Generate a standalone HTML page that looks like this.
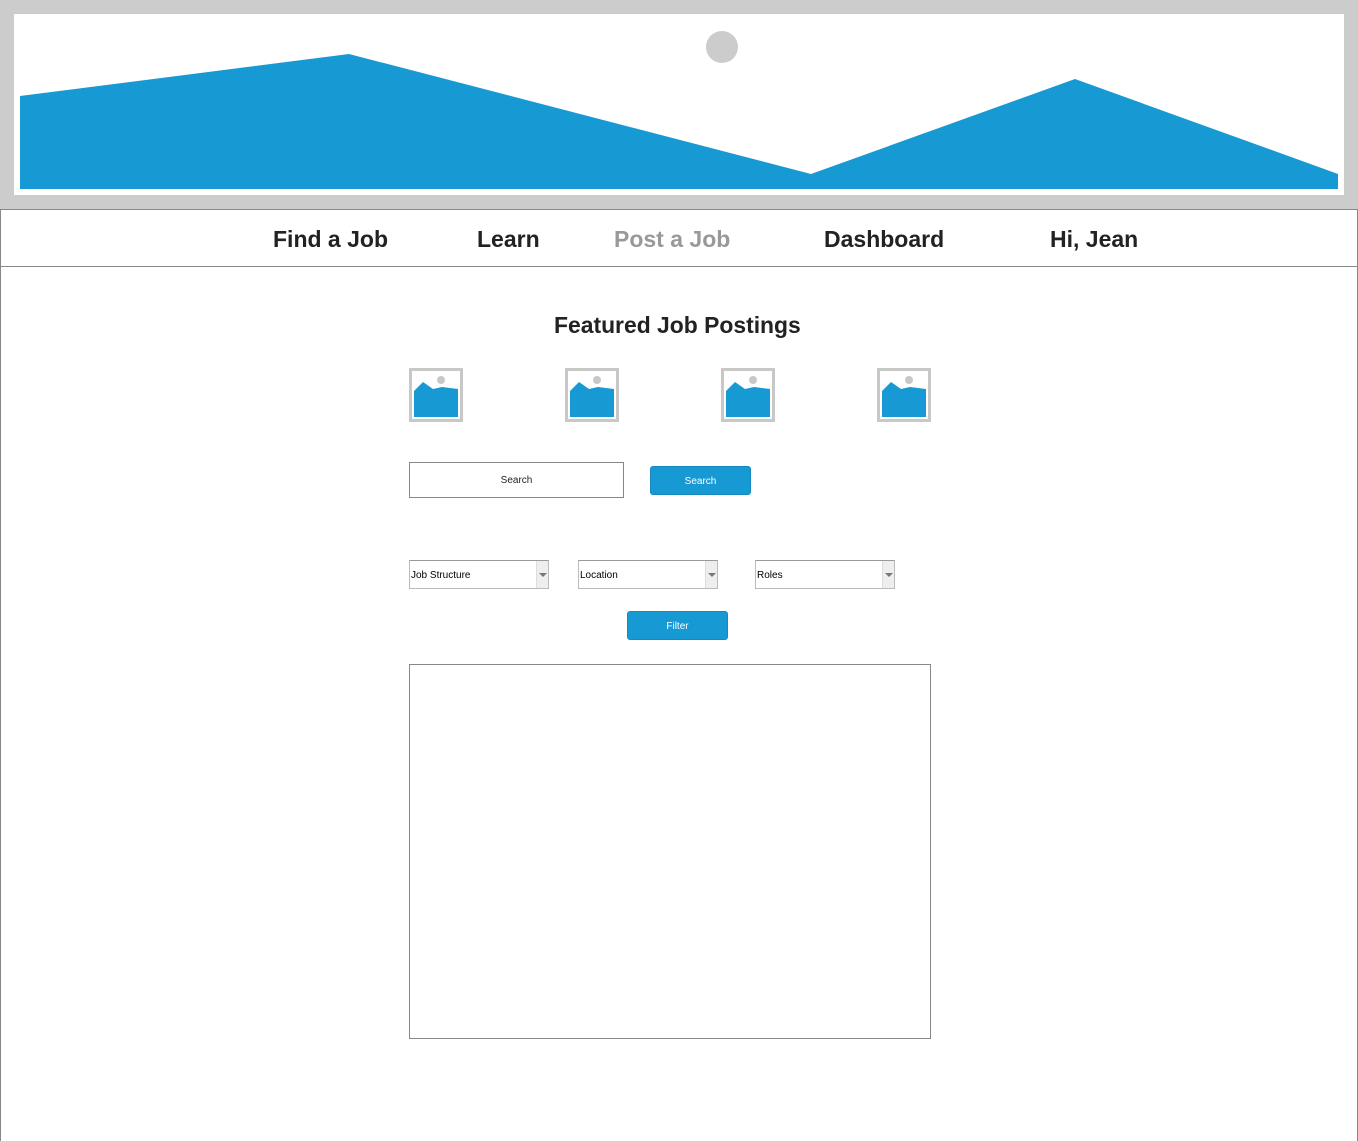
<!DOCTYPE html>
<html><head><meta charset="utf-8"><style>
*{margin:0;padding:0;box-sizing:border-box}
html,body{width:1358px;height:1141px;overflow:hidden;background:#fff;font-family:"Liberation Sans",Arial,sans-serif;position:relative}
.a{position:absolute}
.nav{font-size:23px;font-weight:bold;color:#222;top:225px;line-height:28px}
.img{width:54px;height:54px;top:368px}
.btn{background:#1799d3;border:1px solid #1589bf;border-radius:3px;color:#fff;font-size:10px;text-align:center;height:29px;line-height:30px;width:101px}
.sel{width:140px;height:29px;top:560px;border:1px solid #bbb;border-top:1px solid #999;font-size:10px;line-height:29px;padding-left:1px;color:#000;background:#fff}
.sel .arr{position:absolute;right:0;top:0;width:12px;height:27px;background:#eee;border-left:1px solid #ddd}
.sel .arr:after{content:"";position:absolute;left:2px;top:12px;border-left:4px solid transparent;border-right:4px solid transparent;border-top:4px solid #777}
</style></head><body>
<div class="a" style="left:0;top:0;width:1358px;height:209px;background:#cccccc"></div>
<div class="a" style="left:14px;top:14px;width:1330px;height:181px;background:#fff"></div>
<svg class="a" style="left:0;top:0" width="1358" height="209">
<polygon points="20,96 349,54 811,174 1075,79 1338,174 1338,189 20,189" fill="#1799d3"/>
<circle cx="722" cy="47" r="16" fill="#cccccc"/>
</svg>
<div class="a" style="left:0;top:209px;width:1358px;height:932px;border-left:1px solid #888;border-right:1px solid #888"></div>
<div class="a" style="left:0;top:209px;width:1358px;height:58px;border:1px solid #888"></div>
<div class="a nav" style="left:273px">Find a Job</div>
<div class="a nav" style="left:477px">Learn</div>
<div class="a nav" style="left:614px;color:#999">Post a Job</div>
<div class="a nav" style="left:824px">Dashboard</div>
<div class="a nav" style="left:1050px">Hi, Jean</div>
<div class="a" style="left:554px;top:311px;font-size:22.9px;font-weight:bold;color:#222;line-height:28px;white-space:nowrap">Featured Job Postings</div>
<svg class="a img" style="left:409px" viewBox="0 0 54 54"><rect x="1.5" y="1.5" width="51" height="51" fill="#fff" stroke="#c8c8c8" stroke-width="3"/><circle cx="32" cy="12" r="4" fill="#c8c8c8"/><polygon points="5,23 14,14 24,21 33,19 49,21 49,49 5,49" fill="#1799d3"/></svg>
<svg class="a img" style="left:565px" viewBox="0 0 54 54"><rect x="1.5" y="1.5" width="51" height="51" fill="#fff" stroke="#c8c8c8" stroke-width="3"/><circle cx="32" cy="12" r="4" fill="#c8c8c8"/><polygon points="5,23 14,14 24,21 33,19 49,21 49,49 5,49" fill="#1799d3"/></svg>
<svg class="a img" style="left:721px" viewBox="0 0 54 54"><rect x="1.5" y="1.5" width="51" height="51" fill="#fff" stroke="#c8c8c8" stroke-width="3"/><circle cx="32" cy="12" r="4" fill="#c8c8c8"/><polygon points="5,23 14,14 24,21 33,19 49,21 49,49 5,49" fill="#1799d3"/></svg>
<svg class="a img" style="left:877px" viewBox="0 0 54 54"><rect x="1.5" y="1.5" width="51" height="51" fill="#fff" stroke="#c8c8c8" stroke-width="3"/><circle cx="32" cy="12" r="4" fill="#c8c8c8"/><polygon points="5,23 14,14 24,21 33,19 49,21 49,49 5,49" fill="#1799d3"/></svg>
<div class="a" style="left:409px;top:462px;width:215px;height:36px;border:1px solid #888;font-size:10px;text-align:center;line-height:36px;color:#222">Search</div>
<div class="a btn" style="left:650px;top:466px">Search</div>
<div class="a sel" style="left:409px">Job Structure<div class="arr"></div></div>
<div class="a sel" style="left:578px">Location<div class="arr"></div></div>
<div class="a sel" style="left:755px">Roles<div class="arr"></div></div>
<div class="a btn" style="left:627px;top:611px">Filter</div>
<div class="a" style="left:409px;top:664px;width:522px;height:375px;border:1px solid #888"></div>
</body></html>
